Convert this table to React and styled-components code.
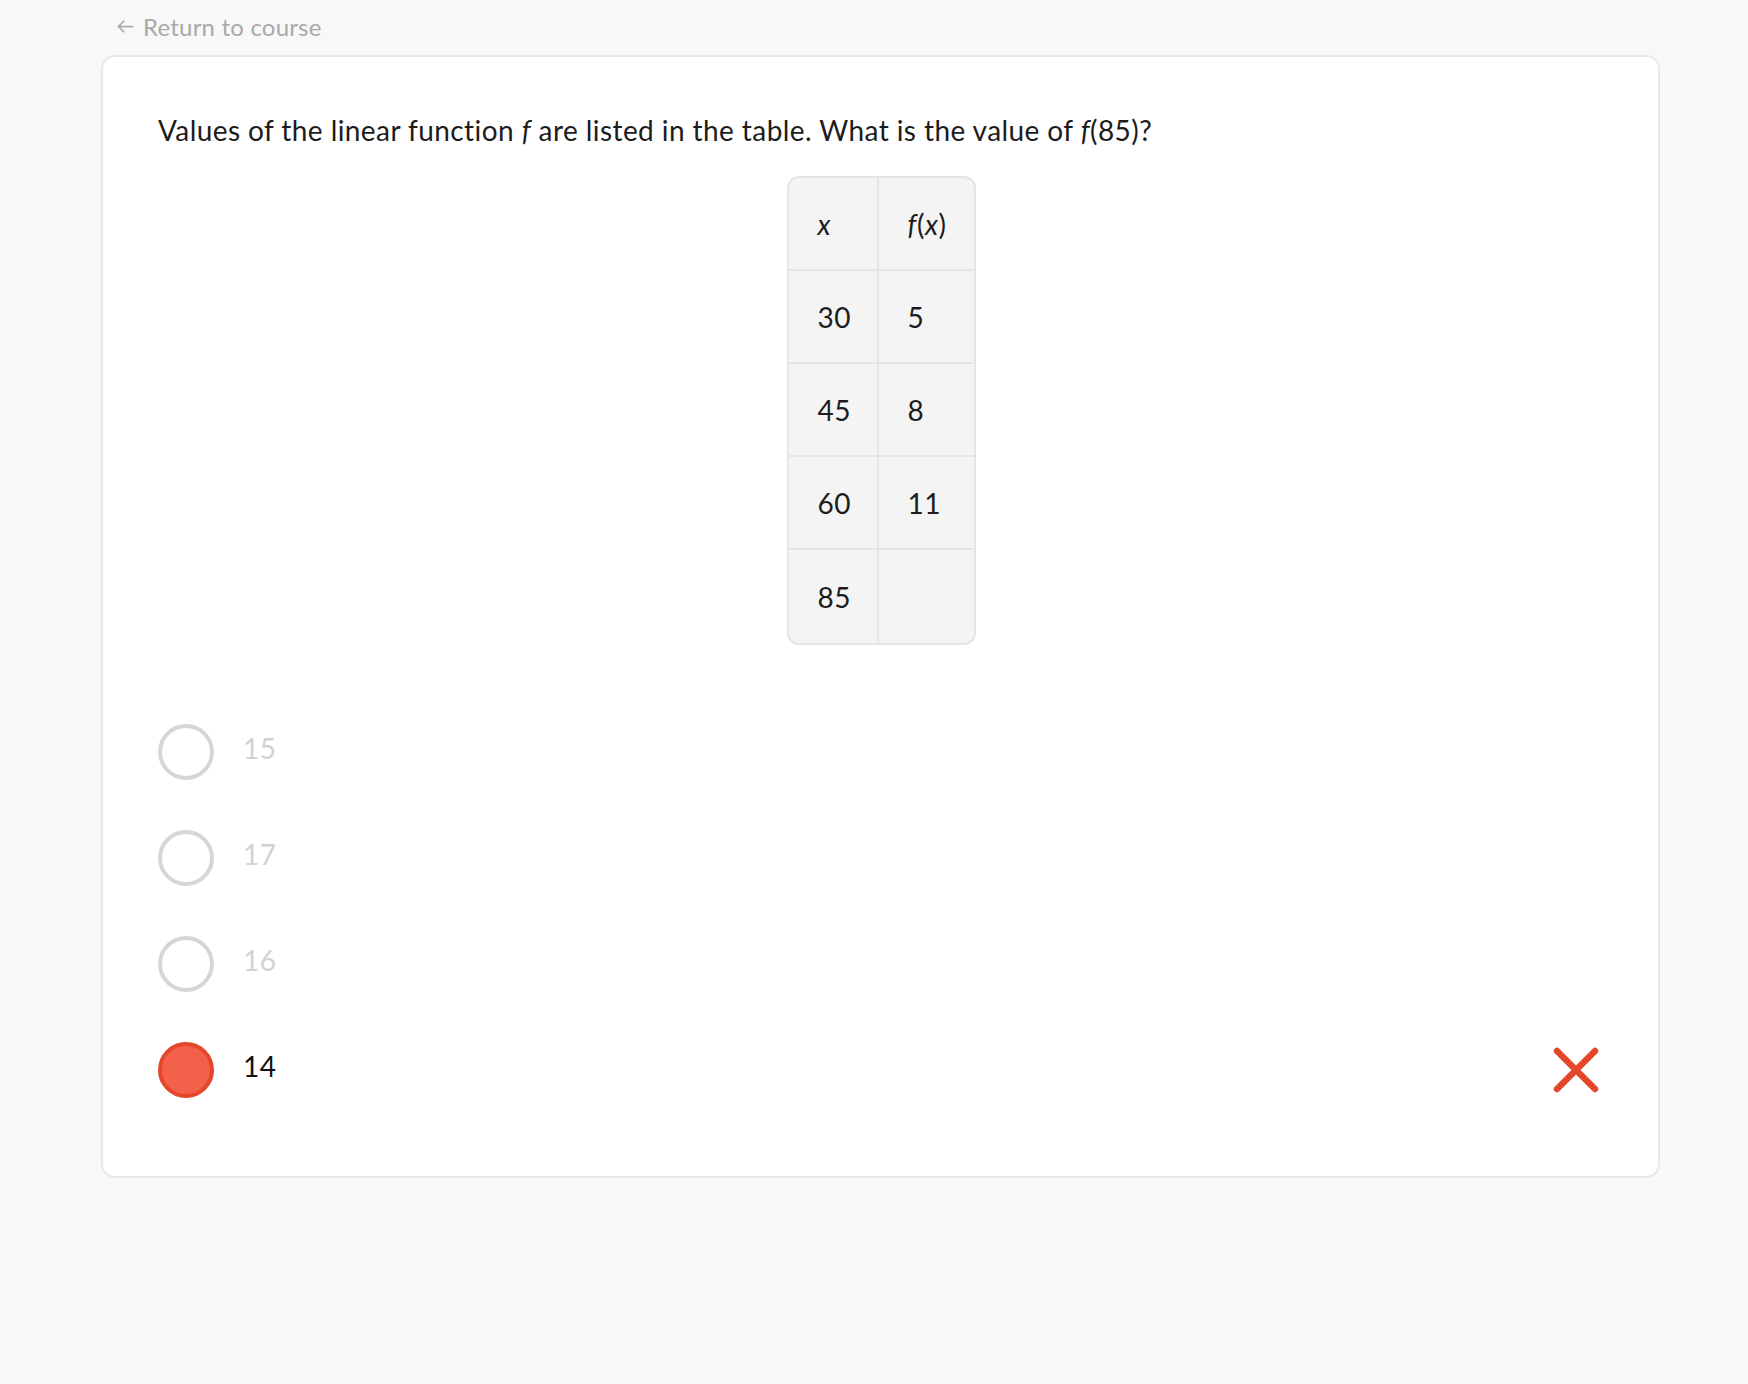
import React from "react";
import styled, { createGlobalStyle } from "styled-components";

const GlobalStyle = createGlobalStyle`
  html, body {
    margin: 0;
    padding: 0;
    background: #f8f8f8;
  }
  body {
    font-family: Lato, "Open Sans", sans-serif;
    color: #1a1a1a;
  }
`;

const table = [
  ["30", "5"],
  ["45", "8"],
  ["60", "11"],
  ["85", ""],
];

const options = [
  { label: "15", selected: false },
  { label: "17", selected: false },
  { label: "16", selected: false },
  { label: "14", selected: true },
];

function App() {
  return (
    <>
      <GlobalStyle />
      <Page>
        <BackLink href="#">
          <svg width="21" height="21" viewBox="0 0 24 24" fill="none" stroke="currentColor" strokeWidth="2" strokeLinecap="round" strokeLinejoin="round">
            <path d="M20 12H4" />
            <path d="M10 6l-6 6 6 6" />
          </svg>
          Return to course
        </BackLink>
        <Card>
          <Question>
            Values of the linear function <i>f</i> are listed in the table. What
            is the value of <i>f</i>(85)?
          </Question>
          <TableWrap>
            <ValueTable>
              <thead>
                <tr>
                  <Cell as="th">
                    <i>x</i>
                  </Cell>
                  <Cell as="th">
                    <i>f</i>(<i>x</i>)
                  </Cell>
                </tr>
              </thead>
              <tbody>
                {table.map(([x, fx]) => (
                  <tr key={x}>
                    <Cell>{x}</Cell>
                    <Cell>{fx}</Cell>
                  </tr>
                ))}
              </tbody>
            </ValueTable>
          </TableWrap>
          <Options>
            {options.map((opt) => (
              <OptionRow key={opt.label}>
                <Radio $selected={opt.selected} />
                <OptionLabel $selected={opt.selected}>{opt.label}</OptionLabel>
                {opt.selected && (
                  <WrongMark width="52" height="52" viewBox="0 0 52 52">
                    <path
                      d="M7 7L45 45M45 7L7 45"
                      stroke="#e5472a"
                      strokeWidth="6.5"
                      strokeLinecap="round"
                    />
                  </WrongMark>
                )}
              </OptionRow>
            ))}
          </Options>
        </Card>
      </Page>
    </>
  );
}

const Page = styled.div`
  width: 1559px;
  margin-left: 101px;
  padding-bottom: 200px;
`;

const BackLink = styled.a`
  display: inline-flex;
  align-items: center;
  gap: 7px;
  height: 55px;
  padding-left: 14px;
  padding-bottom: 2px;
  box-sizing: border-box;
  font-size: 24px;
  letter-spacing: 0.2px;
  color: #a9a9a9;
  text-decoration: none;
`;

const Card = styled.div`
  box-sizing: border-box;
  background: #ffffff;
  border: 2px solid #e6e8eb;
  border-radius: 14px;
  padding: 53px 56px 78px 55px;
`;

const Question = styled.p`
  margin: 0;
  font-size: 28px;
  line-height: 40px;
  letter-spacing: 0.42px;
  color: #1c1c1c;
`;

const TableWrap = styled.div`
  display: flex;
  justify-content: center;
  margin-top: 26px;
`;

const ValueTable = styled.table`
  border-collapse: separate;
  border-spacing: 0;
  background: #f4f4f4;
  border: 2px solid #e3e5e8;
  border-radius: 12px;
  overflow: hidden;
  transform: translateX(1px);

  tr:last-child td {
    border-bottom: none;
  }
  td:last-child,
  th:last-child {
    border-right: none;
    width: 95px;
  }
`;

const Cell = styled.td`
  box-sizing: border-box;
  width: 90px;
  height: 93px;
  padding: 0 0 0 29px;
  text-align: left;
  vertical-align: middle;
  font-size: 28px;
  font-weight: 400;
  letter-spacing: 0.5px;
  color: #1c1c1c;
  border-right: 2px solid #e3e5e8;
  border-bottom: 2px solid #e3e5e8;
`;

const Options = styled.div`
  display: flex;
  flex-direction: column;
  gap: 50px;
  margin-top: 79px;
`;

const OptionRow = styled.div`
  display: flex;
  align-items: center;
  gap: 29px;
  height: 56px;
`;

const Radio = styled.span`
  box-sizing: border-box;
  flex: none;
  width: 56px;
  height: 56px;
  border-radius: 50%;
  border: 4px solid ${(p) => (p.$selected ? "#e4472b" : "#d6d6d6")};
  background: ${(p) => (p.$selected ? "#f4614a" : "#ffffff")};
`;

const OptionLabel = styled.span`
  font-size: 28px;
  letter-spacing: 0.5px;
  margin-top: -9px;
  color: ${(p) => (p.$selected ? "#111111" : "#d2d2d2")};
`;

const WrongMark = styled.svg`
  margin-left: auto;
  flex: none;
`;

export default App;
